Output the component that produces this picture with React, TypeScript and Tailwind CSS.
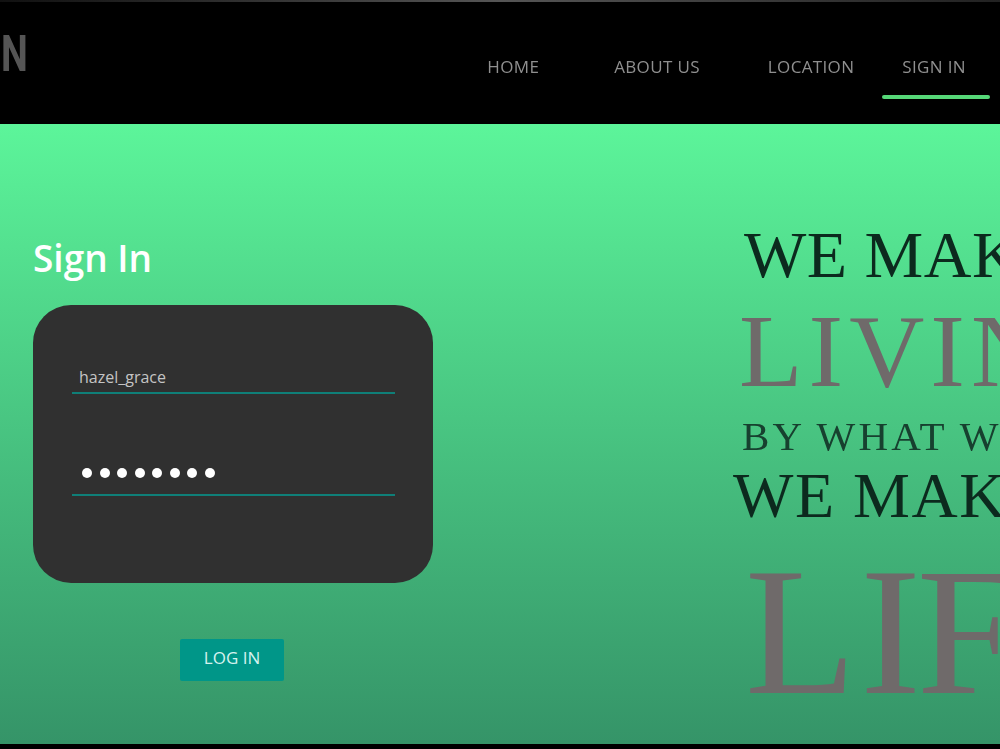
import React from 'react';

function NavLink({ label, className, active }: { label: string; className: string; active?: boolean }) {
  return (
    <a className={`relative block whitespace-nowrap text-[17px] leading-[22px] tracking-[0.35px] text-[#8f8f8f] blur-[0.3px] ${className}`}>
      {label}
      {active && <span className="absolute left-[-20px] right-[-24px] top-[39px] h-[4px] rounded-full bg-[#56d878]" />}
    </a>
  );
}

export default function App() {
  return (
    <div className="h-[749px] w-[1000px] overflow-hidden bg-black font-['Open_Sans',sans-serif]">
      <div className="h-[2px] bg-gradient-to-r from-[#111] via-[#555] to-[#222]" />
      <header className="flex h-[122px] items-start bg-black">
        <div className="ml-[1px] mt-[22px] origin-left scale-x-[0.76] font-['Roboto',sans-serif] text-[50px] font-bold leading-[60px] text-[#555555] blur-[0.5px]">N</div>
        <nav className="ml-auto mr-[34px] mt-[54px] flex items-start">
          <NavLink label="HOME" className="" />
          <NavLink label="ABOUT US" className="ml-[75px]" />
          <NavLink label="LOCATION" className="ml-[68px]" />
          <NavLink label="SIGN IN" className="ml-[48px]" active />
        </nav>
      </header>
      <main className="flex h-[620px] bg-gradient-to-b from-[#5cf59a] to-[#359468]">
        <section className="ml-[33px] w-[400px] shrink-0 pt-[110px]">
          <h1 className="text-[37px] font-semibold leading-[48px] text-white">Sign In</h1>
          <div className="mt-[23px] h-[278px] rounded-[38px] bg-[#303030] pl-[39px] pr-[38px] pt-[60px]">
            <div className="h-[29px] border-b-2 border-[#0f7f78] pl-[7px] text-[16px] leading-[24px] text-[#c4c4c4]">hazel_grace</div>
            <div className="mt-[57px] flex h-[45px] items-center gap-[7.5px] border-b-2 border-[#0f7f78] pl-[10px] pt-[1px]">
              {[0, 1, 2, 3, 4, 5, 6, 7].map((i) => (
                <span key={i} className="h-[10px] w-[10px] rounded-full bg-white" />
              ))}
            </div>
          </div>
          <div className="mt-[56px] flex justify-center">
            <button className="mr-[2px] h-[42px] w-[104px] rounded-[2px] bg-[#009688] pb-[4px] text-[17px] text-[#d5f2ee]">LOG IN</button>
          </div>
        </section>
        <section className="ml-[300px] flex-1 overflow-hidden whitespace-nowrap pt-[96px] font-['Liberation_Serif',serif] uppercase">
          <div className="ml-[11px] text-[66px] leading-[70px] tracking-[0.5px] text-[#0c2a1e] blur-[0.4px]">We make a</div>
          <div className="ml-[6px] mt-[6px] text-[104px] leading-[110px] tracking-[6px] text-[#6f6a6a]">Living</div>
          <div className="ml-[9px] mt-[8px] text-[41px] leading-[44px] tracking-[3.2px] text-[#17402f] blur-[0.4px]">By what we get</div>
          <div className="mt-[3px] text-[64px] leading-[70px] tracking-[1.5px] text-[#0c2a1e] blur-[0.4px]">We make a</div>
          <div className="ml-[12px] mt-[6px] text-[182px] leading-[190px] tracking-[4px] text-[#6f6a6a]">L<span className="tracking-[-4px]">i</span>fe</div>
        </section>
      </main>
      <div className="h-[5px] bg-black" />
    </div>
  );
}
